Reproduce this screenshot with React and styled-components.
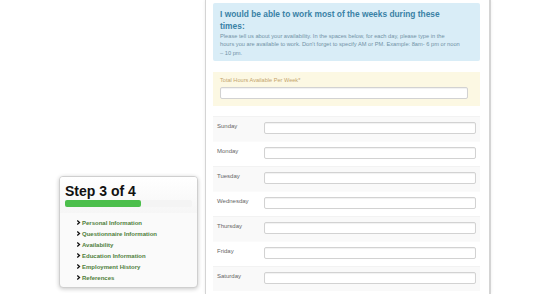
import React from "react";
import styled, { createGlobalStyle } from "styled-components";

const GlobalStyle = createGlobalStyle`
  html, body {
    margin: 0;
    padding: 0;
    background: #ffffff;
    font-family: "Liberation Sans", Arial, sans-serif;
  }
`;

const days = [
  "Sunday",
  "Monday",
  "Tuesday",
  "Wednesday",
  "Thursday",
  "Friday",
  "Saturday",
];

const steps = [
  "Personal Information",
  "Questionnaire Information",
  "Availability",
  "Education Information",
  "Employment History",
  "References",
];

function App() {
  return (
    <>
      <GlobalStyle />
      <Page>
        <Sidebar>
          <StepHeader>
            <h2>Step 3 of 4</h2>
            <Progress>
              <ProgressFill style={{ width: `${(3 / 5) * 100}%` }} />
            </Progress>
          </StepHeader>
          <StepList>
            {steps.map((step) => (
              <StepItem key={step}>
                <Chevron viewBox="0 0 10 10">
                  <path d="M2.5 1 L7 5 L2.5 9" />
                </Chevron>
                <span>{step}</span>
              </StepItem>
            ))}
          </StepList>
        </Sidebar>

        <Panel>
          <InfoAlert>
            <h3>I would be able to work most of the weeks during these times:</h3>
            <p>
              Please tell us about your availability. In the spaces below, for
              each day, please type in the hours you are available to work.
              Don't forget to specify AM or PM. Example: 8am- 6 pm or noon – 10
              pm.
            </p>
          </InfoAlert>

          <WarnBox>
            <label>Total Hours Available Per Week*</label>
            <TextInput type="text" />
          </WarnBox>

          <DayList>
            {days.map((day, i) => (
              <DayRow key={day} striped={i % 2 === 0}>
                <DayLabel>{day}</DayLabel>
                <DayInput type="text" />
              </DayRow>
            ))}
          </DayList>
        </Panel>
      </Page>
    </>
  );
}

export default App;

const Page = styled.div`
  display: flex;
  align-items: flex-start;
  gap: 7px;
  padding-left: 59px;
  min-height: 294px;
  box-sizing: border-box;
`;

const Sidebar = styled.div`
  margin-top: 176px;
  width: 139px;
  height: 112px;
  box-sizing: border-box;
  background: #fafafa;
  border: 1px solid #cfcfcf;
  border-radius: 4px;
  box-shadow: 0 1px 4px rgba(0, 0, 0, 0.22);
  overflow: hidden;
`;

const StepHeader = styled.div`
  padding: 6px 5px 6px 5px;
  background: linear-gradient(#ffffff, #f6f6f6);

  h2 {
    margin: 0;
    font-size: 14px;
    line-height: 16px;
    font-weight: bold;
    color: #111;
  }
`;

const Progress = styled.div`
  margin-top: 1px;
  width: 127px;
  height: 7px;
  border-radius: 2px;
  background: #f4f4f4;
`;

const ProgressFill = styled.div`
  height: 100%;
  border-radius: 2px;
  background: #4cbf4c;
`;

const StepList = styled.ul`
  list-style: none;
  margin: 0;
  padding: 4px 0 0 16px;
`;

const StepItem = styled.li`
  display: flex;
  align-items: center;
  gap: 1px;
  height: 11px;
  font-size: 6px;
  font-weight: bold;
  color: #4f7f3c;
`;

const Chevron = styled.svg`
  width: 5px;
  height: 5px;
  fill: none;
  stroke: #111;
  stroke-width: 2.6;
`;

const Panel = styled.div`
  width: 286px;
  min-height: 294px;
  box-sizing: border-box;
  border-left: 1px solid #d4d4d4;
  border-right: 2px solid #d4d4d4;
  box-shadow: 0 0 3px rgba(0, 0, 0, 0.08);
  padding: 3px 9px 0 7px;
  display: flex;
  flex-direction: column;
`;

const InfoAlert = styled.div`
  background: #d9edf7;
  padding: 5px 20px 4px 7px;
  border-radius: 2px;

  h3 {
    margin: 0;
    font-size: 8.4px;
    line-height: 12px;
    font-weight: bold;
    color: #3a82a6;
  }

  p {
    margin: 0;
    font-size: 5.7px;
    line-height: 8.3px;
    color: #7192a6;
  }
`;

const WarnBox = styled.div`
  margin-top: 11px;
  background: #fcf8e3;
  padding: 4px 12px 7px 7px;
  display: flex;
  flex-direction: column;
  gap: 2px;

  label {
    font-size: 5.6px;
    line-height: 9px;
    color: #c4a46c;
  }
`;

const TextInput = styled.input`
  height: 12px;
  box-sizing: border-box;
  border: 1px solid #d2d2d2;
  border-radius: 2px;
  background: #fff;
  box-shadow: inset 0 1px 1px rgba(0, 0, 0, 0.06);
  padding: 0 3px;
  outline: none;
`;

const DayList = styled.div`
  margin-top: 10px;
  display: flex;
  flex-direction: column;
`;

const DayRow = styled.div`
  height: 25px;
  box-sizing: border-box;
  display: flex;
  align-items: flex-start;
  padding: 5px 4px 0 4px;
  background: ${(props) => (props.striped ? "#f9f9f9" : "#ffffff")};
  border-top: 1px solid ${(props) => (props.striped ? "#f2f2f2" : "#fbfbfb")};
`;

const DayLabel = styled.span`
  width: 47px;
  font-size: 6px;
  line-height: 9px;
  color: #666;
`;

const DayInput = styled(TextInput)`
  flex: 1;
  height: 12px;
`;
